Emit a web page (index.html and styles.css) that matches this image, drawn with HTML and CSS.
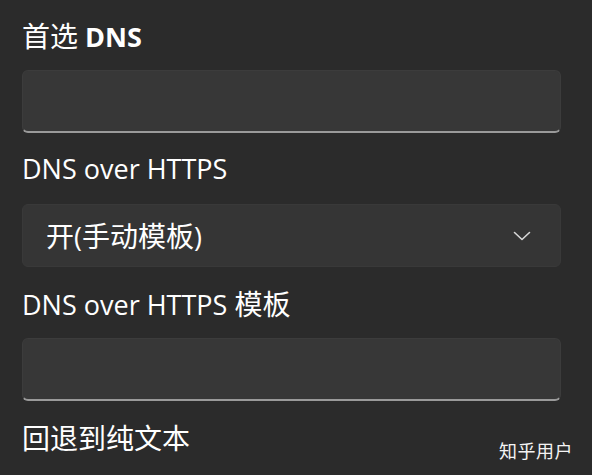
FILE: index.html
```html
<!DOCTYPE html>
<html lang="zh-CN">
<head>
<meta charset="utf-8">
<link rel="stylesheet" href="styles.css">
</head>
<body>
<div class="page">
  <section class="field">
    <div class="label"><span class="cj">首选</span> <b>DNS</b></div>
    <div class="input"></div>
  </section>
  <section class="field">
    <div class="label">DNS over HTTPS</div>
    <div class="select">
      <span class="value"><span class="cj">开</span>(<span class="cj">手动模板</span>)</span>
      <svg class="chev" width="18" height="10" viewBox="0 0 18 10"><path d="M1.5 1.5 L9 8.5 L16.5 1.5" fill="none" stroke="#d8d8d8" stroke-width="1.6" stroke-linecap="round" stroke-linejoin="round"/></svg>
    </div>
  </section>
  <section class="field">
    <div class="label">DNS over HTTPS <span class="cj">模板</span></div>
    <div class="input"></div>
  </section>
  <section class="field last">
    <div class="label"><span class="cj">回退到纯文本</span></div>
  </section>
  <div class="watermark">知乎用户</div>
</div>
</body>
</html>
```
FILE: styles.css
```css
html, body {
  margin: 0;
  padding: 0;
  background: #2b2b2b;
}
body {
  width: 592px;
  height: 475px;
  overflow: hidden;
  font-family: "Open Sans", "Noto Sans CJK SC", sans-serif;
  color: #ffffff;
}
.page {
  position: relative;
  height: 475px;
  padding: 17px 31px 0 22px;
  box-sizing: border-box;
  display: flex;
  flex-direction: column;
}
.field {
  display: flex;
  flex-direction: column;
  margin-bottom: 18px;
}
.label {
  font-size: 27px;
  line-height: 36px;
  height: 36px;
  margin-bottom: 17px;
  white-space: nowrap;
}
.cj {
  font-family: "Noto Sans CJK SC", sans-serif;
  font-size: 28px;
  line-height: 36px;
}
.label b {
  font-weight: 700;
}
.input, .select {
  height: 63px;
  box-sizing: border-box;
  border-radius: 6px;
  background: #373737;
  border: 1px solid #3c3c3c;
}
.input {
  border-bottom: 2px solid #9a9a9a;
}
.select {
  display: flex;
  align-items: center;
  justify-content: space-between;
  padding: 0 29px 0 23px;
  background: #353535;
  border-color: #393939;
}
.value {
  font-size: 27px;
  line-height: 36px;
  white-space: nowrap;
}
.chev {
  display: block;
}
.watermark {
  position: absolute;
  right: 19px;
  bottom: 12px;
  font-family: "Noto Sans CJK SC", sans-serif;
  font-size: 18px;
  letter-spacing: 0.5px;
  color: #f4f4f4;
}
```
